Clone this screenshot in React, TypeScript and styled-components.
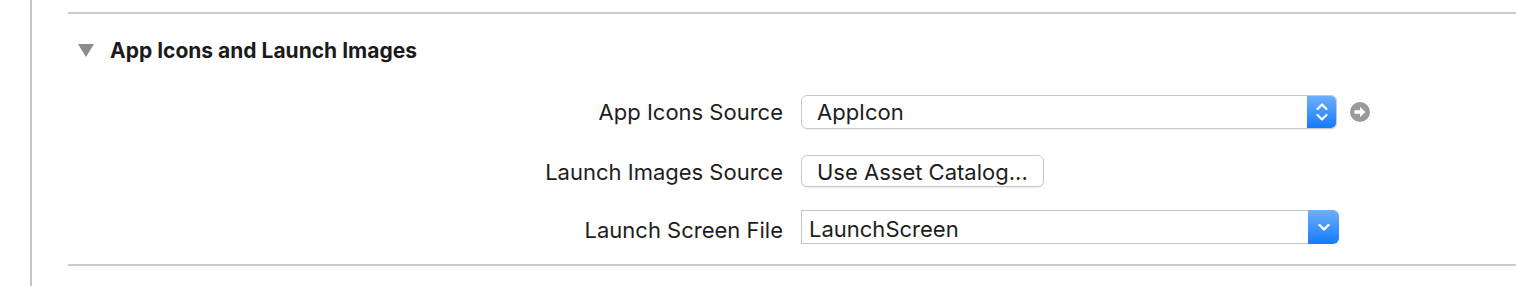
import React from 'react';
import styled, { createGlobalStyle } from 'styled-components';

const GlobalStyle = createGlobalStyle`
  html, body {
    margin: 0;
    padding: 0;
    background: #ffffff;
  }
  body {
    font-family: Inter, "Noto Sans", "Liberation Sans", sans-serif;
    color: #1d1d1d;
  }
`;

// Moldura com a linha vertical à esquerda
const Page = styled.div`
  display: flex;
  height: 286px;
  padding-left: 30px;
  overflow: hidden;
`;

const Rail = styled.div`
  width: 2px;
  background: #c6c6c6;
  flex-shrink: 0;
`;

const Section = styled.section`
  flex: 1;
  margin-left: 36px;
  padding-top: 12px;
  display: flex;
  flex-direction: column;
`;

const Divider = styled.div<{ $gap?: number }>`
  height: 2px;
  background: #cbcbcb;
  margin-top: ${p => p.$gap ?? 0}px;
`;

const Header = styled.div`
  display: flex;
  align-items: center;
  height: 40px;
  margin-top: 16px;
  gap: 16px;
  padding-left: 10px;
`;

const Disclosure = styled.span`
  width: 0;
  height: 0;
  border-left: 8px solid transparent;
  border-right: 8px solid transparent;
  border-top: 13px solid #8c8c8c;
`;

const Title = styled.h2`
  margin: 0;
  font-size: 21px;
  font-weight: 700;
  color: #1b1b1b;
`;

const Form = styled.div`
  display: flex;
  flex-direction: column;
  margin-top: 25px;
`;

const Row = styled.div<{ $gap?: number }>`
  display: grid;
  grid-template-columns: 715px auto auto;
  justify-content: start;
  column-gap: 18px;
  align-items: center;
  height: 34px;
  margin-top: ${p => p.$gap ?? 0}px;
`;

const Label = styled.label<{ $shift?: number }>`
  text-align: right;
  font-size: 22px;
  color: #1d1d1d;
  padding-top: ${p => p.$shift ?? 0}px;
`;

const Popup = styled.div`
  display: flex;
  width: 536px;
  height: 34px;
  box-sizing: border-box;
  border: 1px solid #c9c9c9;
  border-radius: 6px;
  overflow: hidden;
  box-shadow: 0 1px 1px rgba(0, 0, 0, 0.06);
`;

const PopupText = styled.div`
  flex: 1;
  display: flex;
  align-items: center;
  padding-left: 15px;
  font-size: 22px;
`;

const Stepper = styled.div`
  width: 29px;
  display: flex;
  align-items: center;
  justify-content: center;
  background: linear-gradient(#6cb0fd, #167afb);
`;

const Combo = styled.div`
  display: flex;
  width: 538px;
  height: 34px;
`;

const ComboField = styled.div`
  flex: 1;
  display: flex;
  align-items: center;
  padding: 4px 0 0 7px;
  font-size: 22px;
  border: 1px solid #c4c4c4;
  border-right: none;
`;

const ComboButton = styled.div`
  width: 31px;
  display: flex;
  align-items: center;
  justify-content: center;
  border-radius: 0 6px 6px 0;
  background: linear-gradient(#6cb0fd, #167afb);
`;

const Button = styled.button`
  justify-self: start;
  height: 32px;
  padding: 1px 15px 0;
  font-family: inherit;
  font-size: 22px;
  color: #1d1d1d;
  background: #ffffff;
  border: 1px solid #c9c9c9;
  border-radius: 6px;
  box-shadow: 0 1px 1px rgba(0, 0, 0, 0.08);
`;

const GoIcon = () => (
  <svg width="20" height="20" viewBox="0 0 20 20" style={{ marginLeft: -5 }}>
    <circle cx="10" cy="10" r="10" fill="#9a9a9a" />
    <path d="M4.5 8.3h5.5V5l5.5 5-5.5 5v-3.3H4.5z" fill="#ffffff" />
  </svg>
);

const UpDown = () => (
  <svg width="14" height="22" viewBox="0 0 14 22" fill="none" stroke="#ffffff" strokeWidth="2.2" strokeLinecap="round" strokeLinejoin="round">
    <path d="M2.5 8 7 3.5 11.5 8" />
    <path d="M2.5 14 7 18.5 11.5 14" />
  </svg>
);

const Down = () => (
  <svg width="14" height="10" viewBox="0 0 14 10" fill="none" stroke="#ffffff" strokeWidth="2.4" strokeLinecap="round" strokeLinejoin="round">
    <path d="M2.5 3 7 7.5 11.5 3" />
  </svg>
);

export default function App() {
  return (
    <>
      <GlobalStyle />
      <Page>
        <Rail />
        <Section>
          <Divider />
          <Header>
            <Disclosure />
            <Title>App Icons and Launch Images</Title>
          </Header>
          <Form>
            <Row>
              <Label>App Icons Source</Label>
              <Popup>
                <PopupText>AppIcon</PopupText>
                <Stepper>
                  <UpDown />
                </Stepper>
              </Popup>
              <GoIcon />
            </Row>
            <Row $gap={25}>
              <Label $shift={2}>Launch Images Source</Label>
              <Button>Use Asset Catalog...</Button>
            </Row>
            <Row $gap={22}>
              <Label $shift={5}>Launch Screen File</Label>
              <Combo>
                <ComboField>LaunchScreen</ComboField>
                <ComboButton>
                  <Down />
                </ComboButton>
              </Combo>
            </Row>
          </Form>
          <Divider $gap={20} />
        </Section>
      </Page>
    </>
  );
}
